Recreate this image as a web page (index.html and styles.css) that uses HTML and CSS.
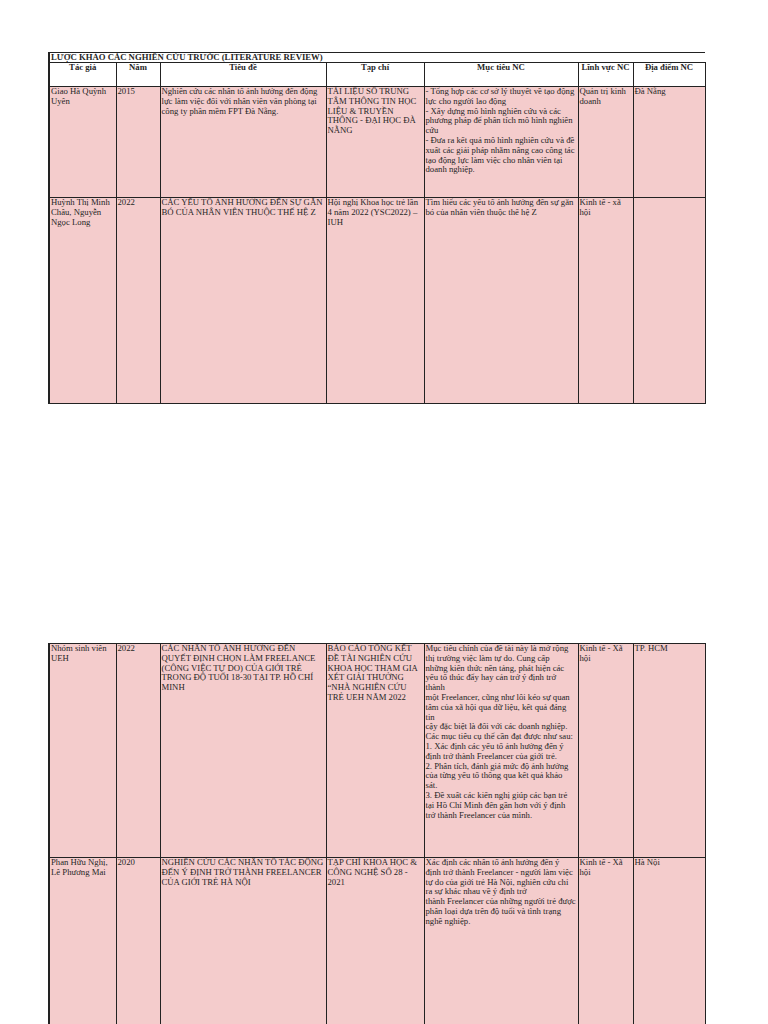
FILE: index.html
```html
<!DOCTYPE html>
<html lang="vi">
<head>
<meta charset="utf-8">
<title>Lược khảo các nghiên cứu trước</title>
<link rel="stylesheet" href="styles.css">
</head>
<body>
<div class="sheet">
  <table class="grid first">
    <colgroup>
      <col class="c-author"><col class="c-year"><col class="c-title"><col class="c-journal"><col class="c-goal"><col class="c-field"><col class="c-place">
    </colgroup>
    <tr class="title-row"><td colspan="7" class="title">LƯỢC KHẢO CÁC NGHIÊN CỨU TRƯỚC (LITERATURE REVIEW)</td></tr>
    <tr class="head-row">
      <th>Tác giả</th><th>Năm</th><th>Tiêu đề</th><th>Tạp chí</th><th>Mục tiêu NC</th><th>Lĩnh vực NC</th><th>Địa điểm NC</th>
    </tr>
    <tr class="r1">
      <td>Giao Hà Quỳnh<br>Uyên</td>
      <td>2015</td>
      <td>Nghiên cứu các nhân tố ảnh hưởng đến động<br>lực làm việc đối với nhân viên văn phòng tại<br>công ty phần mềm FPT Đà Nẵng.</td>
      <td>TÀI LIỆU SỐ TRUNG<br>TÂM THÔNG TIN HỌC<br>LIỆU &amp; TRUYỀN<br>THÔNG - ĐẠI HỌC ĐÀ<br>NẴNG</td>
      <td>- Tổng hợp các cơ sở lý thuyết về tạo động<br>lực cho người lao động<br>- Xây dựng mô hình nghiên cứu và các<br>phương pháp để phân tích mô hình nghiên<br>cứu<br>- Đưa ra kết quả mô hình nghiên cứu và đề<br>xuất các giải pháp nhằm nâng cao công tác<br>tạo động lực làm việc cho nhân viên tại<br>doanh nghiệp.</td>
      <td>Quản trị kinh<br>doanh</td>
      <td>Đà Nẵng</td>
    </tr>
    <tr class="r2">
      <td>Huỳnh Thị Minh<br>Châu, Nguyễn<br>Ngọc Long</td>
      <td>2022</td>
      <td>CÁC YẾU TỐ ẢNH HƯỞNG ĐẾN SỰ GẮN<br>BÓ CỦA NHÂN VIÊN THUỘC THẾ HỆ Z</td>
      <td>Hội nghị Khoa học trẻ lần<br>4 năm 2022 (YSC2022) –<br>IUH</td>
      <td>Tìm hiểu các yếu tố ảnh hưởng đến sự gắn<br>bó của nhân viên thuộc thế hệ Z</td>
      <td>Kinh tế - xã<br>hội</td>
      <td></td>
    </tr>
  </table>

  <table class="grid second">
    <colgroup>
      <col class="c-author"><col class="c-year"><col class="c-title"><col class="c-journal"><col class="c-goal"><col class="c-field"><col class="c-place">
    </colgroup>
    <tr class="r3">
      <td>Nhóm sinh viên<br>UEH</td>
      <td>2022</td>
      <td>CÁC NHÂN TỐ ẢNH HƯỞNG ĐẾN<br>QUYẾT ĐỊNH CHỌN LÀM FREELANCE<br>(CÔNG VIỆC TỰ DO) CỦA GIỚI TRẺ<br>TRONG ĐỘ TUỔI 18-30 TẠI TP. HỒ CHÍ<br>MINH</td>
      <td>BÁO CÁO TỔNG KẾT<br>ĐỀ TÀI NGHIÊN CỨU<br>KHOA HỌC THAM GIA<br>XÉT GIẢI THƯỞNG<br>“NHÀ NGHIÊN CỨU<br>TRẺ UEH NĂM 2022</td>
      <td>Mục tiêu chính của đề tài này là mở rộng<br>thị trường việc làm tự do. Cung cấp<br>những kiến thức nền tảng, phát hiện các<br>yếu tố thúc đẩy hay cản trở ý định trở<br>thành<br>một Freelancer, cũng như lôi kéo sự quan<br>tâm của xã hội qua dữ liệu, kết quả đáng<br>tin<br>cậy đặc biệt là đối với các doanh nghiệp.<br>Các mục tiêu cụ thể cần đạt được như sau:<br>1. Xác định các yếu tố ảnh hưởng đến ý<br>định trở thành Freelancer của giới trẻ.<br>2. Phân tích, đánh giá mức độ ảnh hưởng<br>của từng yếu tố thông qua kết quả khảo<br>sát.<br>3. Đề xuất các kiến nghị giúp các bạn trẻ<br>tại Hồ Chí Minh đến gần hơn với ý định<br>trở thành Freelancer của mình.</td>
      <td>Kinh tế - Xã<br>hội</td>
      <td>TP. HCM</td>
    </tr>
    <tr class="r4">
      <td>Phan Hữu Nghị,<br>Lê Phương Mai</td>
      <td>2020</td>
      <td>NGHIÊN CỨU CÁC NHÂN TỐ TÁC ĐỘNG<br>ĐẾN Ý ĐỊNH TRỞ THÀNH FREELANCER<br>CỦA GIỚI TRẺ HÀ NỘI</td>
      <td>TẠP CHÍ KHOA HỌC &amp;<br>CÔNG NGHỆ SỐ 28 -<br>2021</td>
      <td>Xác định các nhân tố ảnh hưởng đến ý<br>định trở thành Freelancer - người làm việc<br>tự do của giới trẻ Hà Nội, nghiên cứu chỉ<br>ra sự khác nhau về ý định trở<br>thành Freelancer của những người trẻ được<br>phân loại dựa trên độ tuổi và tình trạng<br>nghề nghiệp.</td>
      <td>Kinh tế - Xã<br>hội</td>
      <td>Hà Nội</td>
    </tr>
  </table>
</div>
</body>
</html>
```

FILE: styles.css
```css
html, body {
  margin: 0;
  padding: 0;
  background: #ffffff;
}

body {
  font-family: "Liberation Serif", "Times New Roman", serif;
  color: #262626;
}

.sheet {
  padding: 52px 0 0 48px;
  display: flex;
  flex-direction: column;
  gap: 239px;
}

.grid {
  border-collapse: collapse;
  table-layout: fixed;
  width: 656px;
  font-size: 8.7px;
  line-height: 9.8px;
}

.c-author { width: 67px; }
.c-year { width: 44px; }
.c-title { width: 166px; }
.c-journal { width: 98px; }
.c-goal { width: 154px; }
.c-field { width: 55px; }
.c-place { width: 72px; }

.grid td,
.grid th {
  border: 1px solid #222;
  padding: 0 1px;
  vertical-align: top;
  text-align: left;
  white-space: nowrap;
  overflow: hidden;
  background: #f4cccc;
}

.grid td:first-child,
.grid th:first-child {
  border-left-width: 2px;
}

.title-row td.title {
  background: #ffffff;
  font-weight: bold;
  border-right: 0;
  border-bottom: 1px solid #222;
  height: 8px;
  padding: 0 1px;
  line-height: 9px;
}

.head-row th {
  background: #ffffff;
  font-weight: bold;
  text-align: center;
  height: 23px;
}

.r1 td { height: 110px; }
.r2 td { height: 205px; }
.r3 td { height: 213px; }
.r4 td { height: 220px; }
```
